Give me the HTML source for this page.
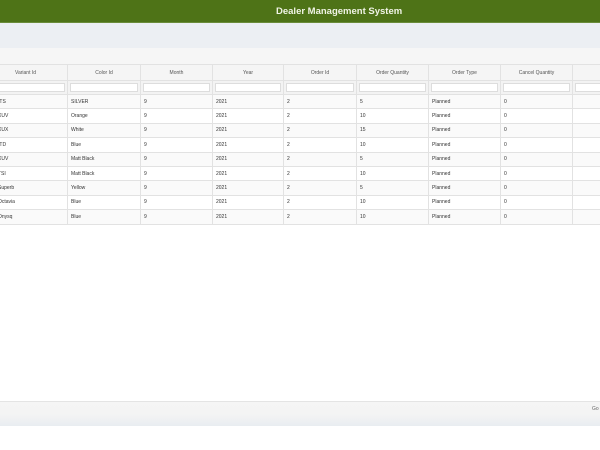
<!DOCTYPE html>
<html><head><style>
*{margin:0;padding:0;box-sizing:border-box}
body{width:600px;height:450px;overflow:hidden;background:#fff;font-family:"Liberation Sans",sans-serif;position:relative}
.hdr{position:absolute;left:0;top:0;width:600px;height:23px;background:#4e7317;border-bottom:1px solid #6a8c3a}
.hdr span{position:absolute;left:276px;top:6px;color:#f0f4e6;font-weight:bold;font-size:9.5px}
.bar1{position:absolute;left:0;top:23px;width:600px;height:25px;background:#eceff3}
.bar2{position:absolute;left:0;top:48px;width:600px;height:16px;background:#f6f6f6}
table{position:absolute;left:-17px;top:64px;width:661px;border-collapse:collapse;table-layout:fixed;font-size:5px;color:#333}
td,th{border:1px solid #e2e2e2;overflow:hidden;white-space:nowrap}
th{height:16px;font-weight:normal;color:#555;background:#f5f5f5;text-align:center}
tr.f td{height:14px;background:#f3f3f3;padding:2px 2px}
tr.f td div{height:9px;background:#fff;border:1px solid #ddd}
tr.d td{height:14.4px;padding-left:3px;border-left-color:#e8e8e8}
tr.d td:first-child{padding-left:14px}
tr.d:nth-child(odd) td{background:#fafafa}
.foot{position:absolute;left:0;top:401px;width:600px;height:25px;background:linear-gradient(#f5f5f5,#f4f4f4 50%,#e9edf1);border-top:1px solid #e4e4e4}
.foot span{position:absolute;left:592px;top:4px;font-size:5px;color:#666}
</style></head><body>
<div class="hdr"><span>Dealer Management System</span></div>
<div class="bar1"></div><div class="bar2"></div>
<table>
<colgroup><col style="width:84px"><col style="width:73px"><col style="width:72px"><col style="width:71px"><col style="width:73px"><col style="width:72px"><col style="width:72px"><col style="width:72px"><col style="width:72px"></colgroup>
<tr><th>Variant Id</th><th>Color Id</th><th>Month</th><th>Year</th><th>Order Id</th><th>Order Quantity</th><th>Order Type</th><th>Cancel Quantity</th><th>R</th></tr>
<tr class="f"><td><div></div></td><td><div></div></td><td><div></div></td><td><div></div></td><td><div></div></td><td><div></div></td><td><div></div></td><td><div></div></td><td><div></div></td></tr>
<tr class="d"><td>ITS</td><td>SILVER</td><td>9</td><td>2021</td><td>2</td><td>5</td><td>Planned</td><td>0</td><td></td></tr>
<tr class="d"><td>XUV</td><td>Orange</td><td>9</td><td>2021</td><td>2</td><td>10</td><td>Planned</td><td>0</td><td></td></tr>
<tr class="d"><td>XUX</td><td>White</td><td>9</td><td>2021</td><td>2</td><td>15</td><td>Planned</td><td>0</td><td></td></tr>
<tr class="d"><td>ITD</td><td>Blue</td><td>9</td><td>2021</td><td>2</td><td>10</td><td>Planned</td><td>0</td><td></td></tr>
<tr class="d"><td>XUV</td><td>Matt Black</td><td>9</td><td>2021</td><td>2</td><td>5</td><td>Planned</td><td>0</td><td></td></tr>
<tr class="d"><td>TSI</td><td>Matt Black</td><td>9</td><td>2021</td><td>2</td><td>10</td><td>Planned</td><td>0</td><td></td></tr>
<tr class="d"><td>Superb</td><td>Yellow</td><td>9</td><td>2021</td><td>2</td><td>5</td><td>Planned</td><td>0</td><td></td></tr>
<tr class="d"><td>Octavia</td><td>Blue</td><td>9</td><td>2021</td><td>2</td><td>10</td><td>Planned</td><td>0</td><td></td></tr>
<tr class="d"><td>Onysq</td><td>Blue</td><td>9</td><td>2021</td><td>2</td><td>10</td><td>Planned</td><td>0</td><td></td></tr>
</table>
<div class="foot"><span>Go</span></div>
</body></html>
